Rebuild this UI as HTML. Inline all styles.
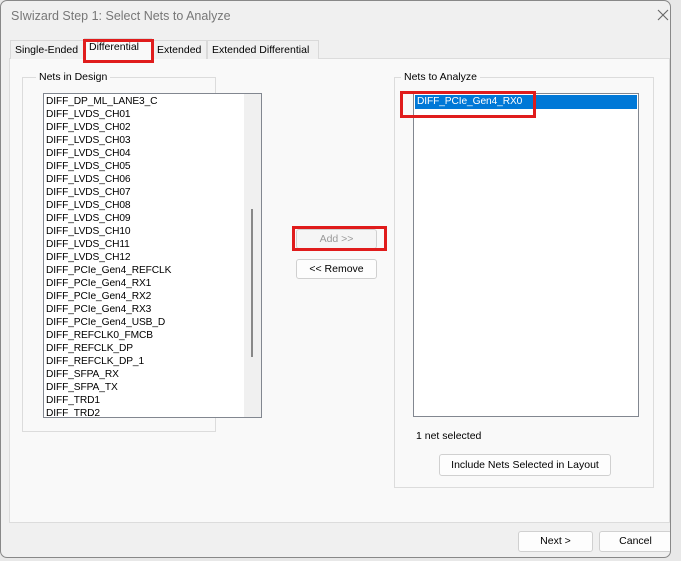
<!DOCTYPE html>
<html><head><style>
*{margin:0;padding:0;box-sizing:border-box}
body{width:681px;height:561px;background:#e8e8e8;font-family:"Liberation Sans",sans-serif;font-size:11px;color:#000;position:relative;overflow:hidden}
.win{position:absolute;left:0;top:0;width:671px;height:558px;background:#f0f0f0;border:1px solid #888;border-radius:7px;overflow:hidden}
.abs{position:absolute}
.title{left:10px;top:8px;font-size:12.5px;color:#777}
.page{left:8px;top:57px;width:661px;height:465px;background:#f9f9f9;border:1px solid #dcdcdc}
.tab{top:39px;height:19px;border:1px solid #d9d9d9;border-bottom:none;background:#f0f0f0;padding:3px 4px;font-size:10.5px;white-space:nowrap}
.grp{border:1px solid #dcdcdc}
.lbl{background:#f9f9f9;padding:0 3px;font-size:10.5px}
.list{background:#fff;border:1px solid #828790}
.item{height:13px;line-height:13px;padding-left:2px;font-size:10.2px;letter-spacing:-0.1px}
.btn{background:#fdfdfd;border:1px solid #d0d0d0;border-radius:3px;text-align:center;font-size:10.5px}
.red{border:3px solid #e01c1c}
</style></head><body>
<div class="win">
<div class="abs title">SIwizard Step 1: Select Nets to Analyze</div>
<svg class="abs" style="left:656px;top:8px" width="12" height="12"><path d="M1 1L11 11M11 1L1 11" stroke="#666" stroke-width="1.1"/></svg>
<div class="abs page"></div>
<div class="abs tab" style="left:9px;width:74px">Single-Ended</div>
<div class="abs tab" style="left:83px;top:37px;height:21px;width:68px;background:#f9f9f9;padding-top:2px">Differential</div>
<div class="abs tab" style="left:151px;width:55px">Extended</div>
<div class="abs tab" style="left:206px;width:112px">Extended Differential</div>
<div class="abs red" style="left:82px;top:38px;width:71px;height:24px"></div>

<div class="abs grp" style="left:21px;top:76px;width:194px;height:355px"></div>
<div class="abs lbl" style="left:35px;top:70px">Nets in Design</div>
<div class="abs list" style="left:42px;top:92px;width:219px;height:325px;overflow:hidden;padding-top:1px">
<div class="abs" style="right:0;top:0;width:17px;height:325px;background:#f0f0f0"></div>
<div class="abs" style="left:207px;top:115px;width:2px;height:148px;background:#888"></div>
<div class="item">DIFF_DP_ML_LANE3_C</div><div class="item">DIFF_LVDS_CH01</div><div class="item">DIFF_LVDS_CH02</div><div class="item">DIFF_LVDS_CH03</div><div class="item">DIFF_LVDS_CH04</div><div class="item">DIFF_LVDS_CH05</div><div class="item">DIFF_LVDS_CH06</div><div class="item">DIFF_LVDS_CH07</div><div class="item">DIFF_LVDS_CH08</div><div class="item">DIFF_LVDS_CH09</div><div class="item">DIFF_LVDS_CH10</div><div class="item">DIFF_LVDS_CH11</div><div class="item">DIFF_LVDS_CH12</div><div class="item">DIFF_PCIe_Gen4_REFCLK</div><div class="item">DIFF_PCIe_Gen4_RX1</div><div class="item">DIFF_PCIe_Gen4_RX2</div><div class="item">DIFF_PCIe_Gen4_RX3</div><div class="item">DIFF_PCIe_Gen4_USB_D</div><div class="item">DIFF_REFCLK0_FMCB</div><div class="item">DIFF_REFCLK_DP</div><div class="item">DIFF_REFCLK_DP_1</div><div class="item">DIFF_SFPA_RX</div><div class="item">DIFF_SFPA_TX</div><div class="item">DIFF_TRD1</div><div class="item">DIFF_TRD2</div>
</div>

<div class="abs btn" style="left:295px;top:228px;width:81px;height:20px;line-height:18px;color:#999;background:#f5f5f5">Add &gt;&gt;</div>
<div class="abs red" style="left:291px;top:225px;width:95px;height:25px"></div>
<div class="abs btn" style="left:295px;top:258px;width:81px;height:20px;line-height:18px">&lt;&lt; Remove</div>

<div class="abs grp" style="left:393px;top:76px;width:260px;height:411px"></div>
<div class="abs lbl" style="left:400px;top:70px">Nets to Analyze</div>
<div class="abs list" style="left:412px;top:92px;width:226px;height:324px;padding:1px">
<div class="item" style="background:#0078d7;color:#fff;height:14px;line-height:14px">DIFF_PCIe_Gen4_RX0</div>
</div>
<div class="abs red" style="left:399px;top:90px;width:136px;height:27px"></div>
<div class="abs" style="left:415px;top:429px;font-size:10.5px">1 net selected</div>
<div class="abs btn" style="left:438px;top:453px;width:172px;height:22px;line-height:20px">Include Nets Selected in Layout</div>

<div class="abs btn" style="left:517px;top:530px;width:75px;height:21px;line-height:19px">Next &gt;</div>
<div class="abs btn" style="left:598px;top:530px;width:73px;height:21px;line-height:19px">Cancel</div>
</div>
</body></html>
